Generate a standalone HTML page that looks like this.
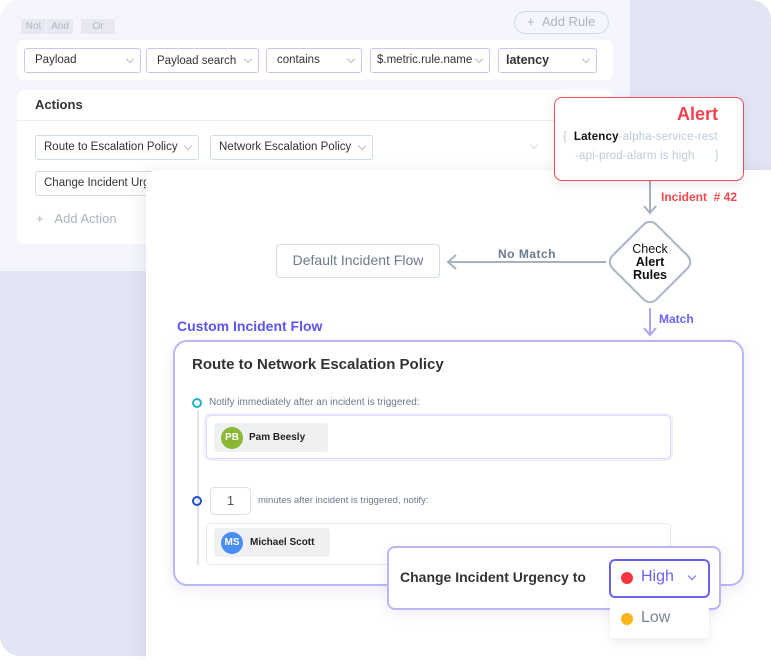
<!DOCTYPE html>
<html><head><meta charset="utf-8"><style>
*{box-sizing:border-box;margin:0;padding:0}
body{width:771px;height:656px;overflow:hidden;background:#fff;font-family:"Liberation Sans",sans-serif;position:relative}
.a{position:absolute}
.sel{position:absolute;height:25px;border:1.5px solid #c9c6f7;border-radius:3px;background:#fff;font-size:11.5px;color:#333;padding-left:10px;line-height:23px}
.sel2{border-color:#cfdbe6}
.chev{position:absolute;right:7px;top:7px;width:6px;height:6px;border-right:1px solid #b7bfcc;border-bottom:1px solid #b7bfcc;transform:rotate(45deg)}
.chip{position:absolute;top:19px;height:15px;background:#e7e8f1;color:#b2b6c2;font-size:10px;line-height:15px;text-align:center}
</style></head><body>
<div class="a" style="left:0;top:0;width:771px;height:656px;background:#e3e4f4;border-radius:20px;overflow:hidden">
 <div class="a" style="left:0;top:0;width:630px;height:271px;background:#f4f5fd;border-radius:14px 0 0 0"></div>
</div>
<div class="chip" style="left:21px;width:25px">Not</div>
<div class="chip" style="left:47px;width:26px">And</div>
<div class="chip" style="left:81px;width:34px">Or</div>
<div class="a" style="left:514px;top:11px;width:95px;height:23px;border:1.5px solid #d3dbe5;border-radius:12px;color:#a9b4c4;font-size:13px;line-height:20px;padding-left:12px">+&nbsp;&nbsp;Add Rule</div>
<div class="a" style="left:17px;top:40px;width:596px;height:40px;background:#fff;border-radius:6px"></div>
<div class="sel" style="left:24px;top:48px;width:117px">Payload<i class="chev"></i></div>
<div class="sel" style="left:146px;top:48px;width:113px;line-height:24px">Payload search<i class="chev"></i></div>
<div class="sel" style="left:266px;top:48px;width:96px">contains<i class="chev"></i></div>
<div class="sel" style="left:370px;top:48px;width:120px;padding-left:6px">$.metric.rule.name<i class="chev"></i></div>
<div class="sel" style="left:498px;top:48px;width:99px;font-weight:bold;font-size:12.5px;padding-left:7px">latency<i class="chev"></i></div>
<div class="a" style="left:17px;top:90px;width:596px;height:154px;background:#fff;border-radius:8px"></div>
<div class="a" style="left:35px;top:97px;font-size:13px;font-weight:bold;color:#333">Actions</div>
<div class="a" style="left:17px;top:120px;width:596px;height:1px;background:#eceef3"></div>
<div class="sel sel2" style="left:35px;top:135px;width:164px;padding-left:8px">Route to Escalation Policy<i class="chev"></i></div>
<div class="sel sel2" style="left:210px;top:135px;width:163px;padding-left:8px">Network Escalation Policy<i class="chev"></i></div>
<div class="a" style="left:531px;top:142px;width:6px;height:6px;border-right:1px solid #d4dae3;border-bottom:1px solid #d4dae3;transform:rotate(45deg)"></div>
<div class="sel sel2" style="left:35px;top:171px;width:164px;padding-left:8px">Change Incident Urgency<i class="chev"></i></div>
<div class="sel sel2" style="left:210px;top:171px;width:163px"></div>
<div class="a" style="left:36px;top:211px;font-size:13px;color:#aab4c4">+&nbsp;&nbsp;&nbsp;Add Action</div>

<div class="a" style="left:146px;top:170px;width:630px;height:490px;background:#fff;border-radius:12px 0 0 0;box-shadow:-4px 0 14px rgba(120,120,170,.12)"></div>

<svg class="a" style="left:0;top:0" width="771" height="656">
 <path d="M650 181V212M644 206L650 213L656 206" stroke="#a6b2bf" stroke-width="2" fill="none"/>
 <path d="M448 262H606M456 255L448 262L456 269" stroke="#a6b2bf" stroke-width="2" fill="none"/>
 <path d="M650 308V334M644 328L650 335L656 328" stroke="#aaa4f6" stroke-width="2" fill="none"/>
 <rect x="619" y="231" width="62" height="62" rx="9" transform="rotate(45 650 262)" fill="#fff" stroke="#aab6c2" stroke-width="2"/>
</svg>
<div class="a" style="left:610px;top:243px;width:80px;text-align:center;font-size:12.5px;line-height:13px;color:#111">Check<br><b>Alert<br>Rules</b></div>
<div class="a" style="left:498px;top:247px;font-size:12px;font-weight:bold;color:#6b7a8c;letter-spacing:.5px">No Match</div>
<div class="a" style="left:276px;top:244px;width:164px;height:34px;border:1.5px solid #d3dee8;border-radius:4px;font-size:14px;color:#6b7a8c;line-height:31px;text-align:center">Default Incident Flow</div>
<div class="a" style="left:659px;top:312px;font-size:12px;font-weight:bold;color:#6c63f5">Match</div>
<div class="a" style="left:661px;top:190px;font-size:12px;font-weight:bold;color:#f2474f">Incident&nbsp; # 42</div>

<div class="a" style="left:554px;top:97px;width:190px;height:84px;border:1.5px solid #f04b55;border-radius:8px;background:#fff;box-shadow:0 4px 12px rgba(0,0,0,.08)"></div>
<div class="a" style="left:677px;top:104px;font-size:18px;font-weight:bold;color:#f5424c">Alert</div>
<div class="a" style="left:563px;top:131px;font-size:11.5px;color:#bccbd8;letter-spacing:.2px">{&nbsp; <b style="color:#111">Latency</b>-alpha-service-rest</div>
<div class="a" style="left:575px;top:150px;font-size:11.5px;color:#bccbd8;letter-spacing:.2px">-api-prod-alarm is high&nbsp;&nbsp;&nbsp;&nbsp;&nbsp;&nbsp;}</div>

<div class="a" style="left:177px;top:318px;font-size:14px;font-weight:bold;color:#5b55f0">Custom Incident Flow</div>
<div class="a" style="left:173px;top:340px;width:571px;height:246px;border:2px solid #bab7f6;border-radius:14px;background:#fff;box-shadow:0 4px 14px rgba(100,100,170,.12)"></div>
<div class="a" style="left:192px;top:356px;font-size:15px;font-weight:bold;color:#333">Route to Network Escalation Policy</div>
<div class="a" style="left:197px;top:410px;width:1.5px;height:155px;background:#e2e6ec"></div>
<div class="a" style="left:192px;top:398px;width:10px;height:10px;border:2px solid #1fb5c9;border-radius:50%"></div>
<div class="a" style="left:209px;top:397px;font-size:10px;color:#6b7a8c">Notify immediately after an incident is triggered:</div>
<div class="a" style="left:206px;top:415px;width:465px;height:44px;border:1.5px solid #dcdaf5;border-radius:5px;box-shadow:0 0 0 2px #efeefc"></div>
<div class="a" style="left:214px;top:423px;width:114px;height:29px;background:#eff0f2;border-radius:3px"></div>
<div class="a" style="left:221px;top:427px;width:22px;height:22px;border-radius:50%;background:#8ab833;color:#fff;font-size:10px;font-weight:bold;text-align:center;line-height:22px">PB</div>
<div class="a" style="left:249px;top:432px;font-size:10px;font-weight:bold;color:#222">Pam Beesly</div>
<div class="a" style="left:192px;top:496px;width:10px;height:10px;border:2px solid #1f4fd0;border-radius:50%"></div>
<div class="a" style="left:210px;top:487px;width:41px;height:28px;border:1.5px solid #dde2e8;border-radius:4px;font-size:13px;color:#555;text-align:center;line-height:25px">1</div>
<div class="a" style="left:258px;top:495px;font-size:9.5px;color:#6b7a8c">minutes after incident is triggered, notify:</div>
<div class="a" style="left:206px;top:523px;width:465px;height:42px;border:1.5px solid #e3e6ec;border-radius:5px"></div>
<div class="a" style="left:214px;top:528px;width:116px;height:29px;background:#eff0f2;border-radius:3px"></div>
<div class="a" style="left:221px;top:532px;width:22px;height:22px;border-radius:50%;background:#4a8cf0;color:#fff;font-size:10px;font-weight:bold;text-align:center;line-height:22px">MS</div>
<div class="a" style="left:250px;top:537px;font-size:10px;font-weight:bold;color:#222">Michael Scott</div>

<div class="a" style="left:387px;top:546px;width:334px;height:64px;border:2px solid #bab7f6;border-radius:8px;background:#fff;box-shadow:0 4px 12px rgba(100,100,170,.1)"></div>
<div class="a" style="left:400px;top:569px;font-size:14px;font-weight:bold;color:#333">Change Incident Urgency to</div>
<div class="a" style="left:610px;top:598px;width:99px;height:40px;background:#fff;border-radius:4px;box-shadow:0 4px 10px rgba(0,0,0,.08)"></div>
<div class="a" style="left:621px;top:613px;width:12px;height:12px;border-radius:50%;background:#fbb515"></div>
<div class="a" style="left:641px;top:609px;font-size:16px;color:#778496">Low</div>
<div class="a" style="left:609px;top:559px;width:101px;height:39px;border:2px solid #6b63f0;border-radius:6px;background:#fff"></div>
<div class="a" style="left:621px;top:572px;width:12px;height:12px;border-radius:50%;background:#f5343f"></div>
<div class="a" style="left:641px;top:568px;font-size:16px;color:#6b63f0">High</div>
<div class="a" style="left:689px;top:573px;width:6px;height:6px;border-right:1.5px solid #6b63f0;border-bottom:1.5px solid #6b63f0;transform:rotate(45deg)"></div>
</body></html>
